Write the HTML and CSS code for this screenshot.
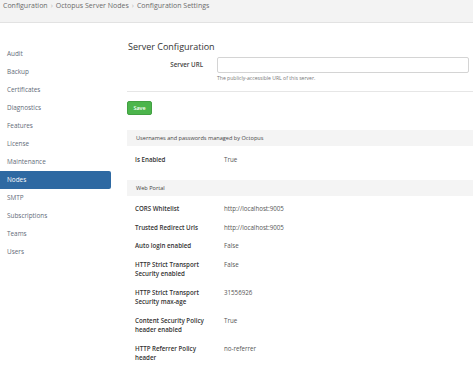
FILE: index.html
```html
<!DOCTYPE html>
<html>
<head>
<meta charset="utf-8">
<link rel="stylesheet" href="styles.css">
</head>
<body>
<div class="header">
  <span class="crumb">Configuration</span><span class="sep">›</span><span class="crumb">Octopus Server Nodes</span><span class="sep">›</span><span class="crumb">Configuration Settings</span>
</div>
<div class="layout">
  <nav class="sidebar">
    <div class="nav-item">Audit</div>
    <div class="nav-item">Backup</div>
    <div class="nav-item">Certificates</div>
    <div class="nav-item">Diagnostics</div>
    <div class="nav-item">Features</div>
    <div class="nav-item">License</div>
    <div class="nav-item">Maintenance</div>
    <div class="nav-item active">Nodes</div>
    <div class="nav-item">SMTP</div>
    <div class="nav-item">Subscriptions</div>
    <div class="nav-item">Teams</div>
    <div class="nav-item">Users</div>
  </nav>
  <main class="main">
    <h1 class="title">Server Configuration</h1>
    <div class="form-row">
      <label class="form-label">Server URL</label>
      <div class="form-field">
        <div class="input"></div>
        <div class="help">The publicly-accessible URL of this server.</div>
      </div>
    </div>
    <div class="divider"></div>
    <div class="btn">Save</div>

    <div class="band">Usernames and passwords managed by Octopus</div>
    <div class="rows">
      <div class="row"><div class="key">Is Enabled</div><div class="val">True</div></div>
    </div>

    <div class="band portal">Web Portal</div>
    <div class="rows">
      <div class="row"><div class="key">CORS Whitelist</div><div class="val">http://localhost:9005</div></div>
      <div class="row"><div class="key">Trusted Redirect Urls</div><div class="val">http://localhost:9005</div></div>
      <div class="row"><div class="key">Auto login enabled</div><div class="val">False</div></div>
      <div class="row"><div class="key">HTTP Strict Transport Security enabled</div><div class="val">False</div></div>
      <div class="row"><div class="key">HTTP Strict Transport Security max-age</div><div class="val">31556926</div></div>
      <div class="row"><div class="key">Content Security Policy header enabled</div><div class="val">True</div></div>
      <div class="row"><div class="key">HTTP Referrer Policy header</div><div class="val">no-referrer</div></div>
    </div>
  </main>
</div>
</body>
</html>
```

FILE: styles.css
```css
* { box-sizing: border-box; }
html, body { margin: 0; padding: 0; background: #fff; }
body {
  font-family: "Open Sans", "Noto Sans", sans-serif;
  color: #333;
  width: 474px;
  height: 365px;
  overflow: hidden;
}
.header {
  height: 23px;
  background: #f3f3f3;
  border-bottom: 1px solid #e2e2e2;
  padding: 1px 0 0 3px;
  margin-right: 1px;
  font-size: 7px;
  line-height: 10px;
  color: #6b6b6b;
  white-space: nowrap;
}
.sep { color: #b5b5b5; margin: 0 3px; }
.layout { display: flex; }
.sidebar {
  width: 111px;
  flex: none;
  padding-top: 22px;
}
.nav-item {
  height: 18px;
  line-height: 18px;
  padding-left: 7px;
  font-size: 6.4px;
  color: #5f6b78;
}
.nav-item.active {
  background: #2e69a2;
  color: #fff;
  border-radius: 0 2px 2px 0;
}
.main {
  flex: 1;
  padding-left: 16px;
  padding-right: 1px;
}
.title {
  margin: 18px 0 0 1px;
  font-size: 9px;
  line-height: 12px;
  font-weight: 400;
  color: #333;
}
.form-row {
  display: flex;
  margin-top: 4px;
}
.form-label {
  width: 90px;
  flex: none;
  text-align: right;
  padding-right: 14px;
  font-size: 6.2px;
  font-weight: 600;
  line-height: 16px;
  color: #444;
}
.form-field { flex: 1; padding-right: 4px; }
.input {
  height: 16px;
  border: 1px solid #d4d4d4;
  border-radius: 2px;
  background: #fff;
}
.help {
  margin-top: 1px;
  font-size: 5.1px;
  line-height: 8px;
  color: #777;
}
.divider {
  margin-top: 9px;
  border-top: 1px solid #e6e6e6;
}
.btn {
  margin: 9px 0 0 0;
  width: 25px;
  height: 14px;
  line-height: 12px;
  background: #4cb54c;
  border: 1px solid #43a043;
  border-radius: 2px;
  color: #fff;
  font-size: 5.4px;
  font-weight: 600;
  text-align: center;
}
.band {
  margin-top: 15px;
  height: 16px;
  line-height: 16px;
  background: #f4f4f4;
  padding-left: 9px;
  font-size: 5.6px;
  color: #444;
}
.band.portal { margin-top: 11px; }
.rows { padding-top: 4px; }
.row {
  display: flex;
  padding: 4.5px 0;
  font-size: 6.2px;
  line-height: 9.5px;
}
.key {
  width: 97px;
  flex: none;
  padding-left: 8px;
  padding-right: 8px;
  font-weight: 600;
  color: #333;
}
.val {
  flex: 1;
  color: #555;
}
```
